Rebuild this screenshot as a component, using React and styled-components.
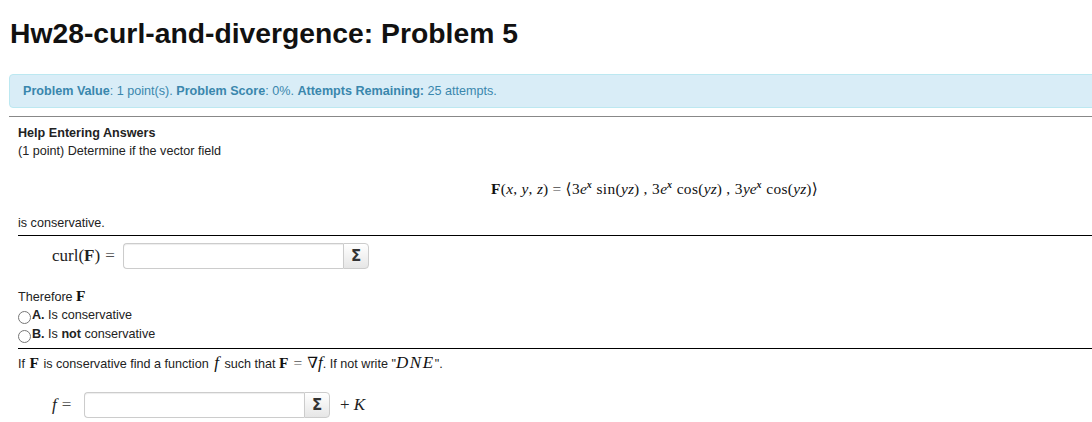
import React from 'react'
import styled, { createGlobalStyle } from 'styled-components'

const Global = createGlobalStyle`
  html, body {
    margin: 0;
    background: #fff;
    overflow: hidden;
  }
  body {
    font-family: "Liberation Sans", Arial, sans-serif;
    font-size: 12.6px;
    line-height: 18px;
    color: #333;
  }
`

const Page = styled.div`
  width: 1092px;
  height: 422px;
  padding-left: 9px;
  box-sizing: border-box;
  overflow: hidden;
`

const Title = styled.h1`
  margin: 0;
  padding: 14px 0 0 1px;
  height: 74px;
  box-sizing: border-box;
  font-size: 28.3px;
  line-height: 38px;
  font-weight: 700;
  color: #111;
`

const Alert = styled.div`
  height: 34px;
  box-sizing: border-box;
  margin-right: -6px;
  padding: 7px 13px;
  background: #d9edf7;
  border: 1px solid #bce8f1;
  border-radius: 4px;
  color: #3a87ad;
  line-height: 18px;
`

const Rule = styled.hr`
  margin: ${p => p.$top || 0}px 0 ${p => p.$bottom || 0}px;
  border: 0;
  border-top: 1px solid ${p => p.$color || '#000'};
`

const Problem = styled.div`
  padding-left: 9px;
  color: #222;
`

const Line = styled.div`
  height: ${p => p.$height || 18}px;
  margin-top: ${p => p.$top || 0}px;
  line-height: 18px;
  white-space: nowrap;
`

const MathText = styled.span`
  font-family: "Liberation Serif", "DejaVu Serif", serif;
  font-size: 15.5px;
  line-height: 0;
  margin: 0 ${p => p.$gap ?? 1}px;
  color: #111;
`

const DisplayMath = styled.div`
  height: 34px;
  margin-top: 20px;
  padding-left: 473px;
  box-sizing: border-box;
  white-space: nowrap;
  font-family: "Liberation Serif", "DejaVu Serif", serif;
  font-size: 15.4px;
  letter-spacing: 0.38px;
  line-height: 18px;
  color: #111;
`

const Var = styled.i`
  font-style: italic;
  font-size: ${p => (p.$size ? `${p.$size}px` : 'inherit')};
  letter-spacing: ${p => p.$spread || 0}px;
`

const Fn = styled.span`
  font-size: inherit;
`

const Bf = styled.b`
  font-size: inherit;
`

const Sup = styled.sup`
  font-style: italic;
  font-weight: 700;
  font-size: 10px;
  line-height: 0;
  vertical-align: 6px;
`

const Op = styled.span`
  color: ${p => p.$color || 'inherit'};
  margin: 0 ${p => p.$gap ?? 4}px;
`

const AnswerRow = styled.div`
  display: flex;
  align-items: center;
  height: 26px;
  margin-top: ${p => p.$top || 0}px;
  padding-left: ${p => p.$indent}px;
`

const MathLabel = styled.span`
  display: block;
  width: ${p => p.$width}px;
  font-family: "Liberation Serif", serif;
  font-size: 17px;
  white-space: nowrap;
  color: #222;
`

const AnswerBox = styled.span`
  display: block;
  width: ${p => p.$width}px;
  height: 26px;
  box-sizing: border-box;
  background: #fff;
  border: 1px solid #ccc;
  border-right: 0;
  border-radius: 4px 0 0 4px;
  box-shadow: inset 0 1px 1px rgba(0, 0, 0, 0.075);
`

const SigmaButton = styled.span`
  display: flex;
  align-items: center;
  justify-content: center;
  width: 26px;
  height: 26px;
  box-sizing: border-box;
  background: linear-gradient(#fff, #e6e6e6);
  border: 1px solid #ccc;
  border-radius: 0 4px 4px 0;
  font-family: "DejaVu Sans", sans-serif;
  font-size: 15px;
  font-weight: 700;
  color: #333;
`

const Suffix = styled.span`
  margin-left: 10px;
  font-family: "Liberation Serif", serif;
  font-size: 17px;
  color: #222;
`

const Choice = styled.label`
  display: flex;
  align-items: center;
  height: 19px;
  white-space: nowrap;
`

const Radio = styled.input.attrs({ type: 'radio' })`
  width: 13px;
  height: 13px;
  margin: 5px 1px 0 0;
`

const App = () => {
  return (
    <Page>
      <Global />
      <Title>Hw28-curl-and-divergence: Problem 5</Title>
      <Alert>
        <b>Problem Value</b>: 1 point(s). <b>Problem Score</b>: 0%. <b>Attempts Remaining:</b> 25 attempts.
      </Alert>
      <Rule $color="#888" $top={8} $bottom={7} />
      <Problem>
        <Line><b>Help Entering Answers</b></Line>
        <Line>(1 point) Determine if the vector field</Line>
        <DisplayMath>
          <Bf>F</Bf>(<Var>x</Var>, <Var>y</Var>, <Var>z</Var>)<Op $color="#444">=</Op>⟨3<Var>e</Var><Sup>x</Sup> <Fn>sin</Fn>(<Var>yz</Var>) , 3<Var>e</Var><Sup>x</Sup> <Fn>cos</Fn>(<Var>yz</Var>) , 3<Var>ye</Var><Sup>x</Sup> <Fn>cos</Fn>(<Var>yz</Var>)⟩
        </DisplayMath>
        <Line>is conservative.</Line>
        <Rule $top={3} $bottom={7} />
        <AnswerRow $indent={34}>
          <MathLabel $width={71}>curl(<Bf>F</Bf>)<Op $gap={5} $color="#555">=</Op></MathLabel>
          <AnswerBox $width={220} />
          <SigmaButton>Σ</SigmaButton>
        </AnswerRow>
        <Line $top={19} $height={17}>Therefore <MathText $gap={0}><Bf>F</Bf></MathText></Line>
        <Choice><Radio name="c" /><span><b>A.</b> Is conservative</span></Choice>
        <Choice><Radio name="c" /><span><b>B.</b> Is <b>not</b> conservative</span></Choice>
        <Rule $top={5} $bottom={6} />
        <Line>
          If <MathText><Bf>F</Bf></MathText> is conservative find a function <MathText $gap={2}><Var $size={17}>f</Var></MathText> such that <MathText $gap={0}><Bf>F</Bf><Op $gap={5} $color="#555">=</Op>∇<Var $size={17}>f</Var></MathText>. If not write "<MathText $gap={0}><Var $size={17} $spread={1.6}>DNE</Var></MathText>".
        </Line>
        <AnswerRow $indent={34} $top={19}>
          <MathLabel $width={32}><Var>f</Var><Op $gap={5} $color="#555">=</Op></MathLabel>
          <AnswerBox $width={220} />
          <SigmaButton>Σ</SigmaButton>
          <Suffix>+ <Var>K</Var></Suffix>
        </AnswerRow>
      </Problem>
    </Page>
  )
}

export default App
